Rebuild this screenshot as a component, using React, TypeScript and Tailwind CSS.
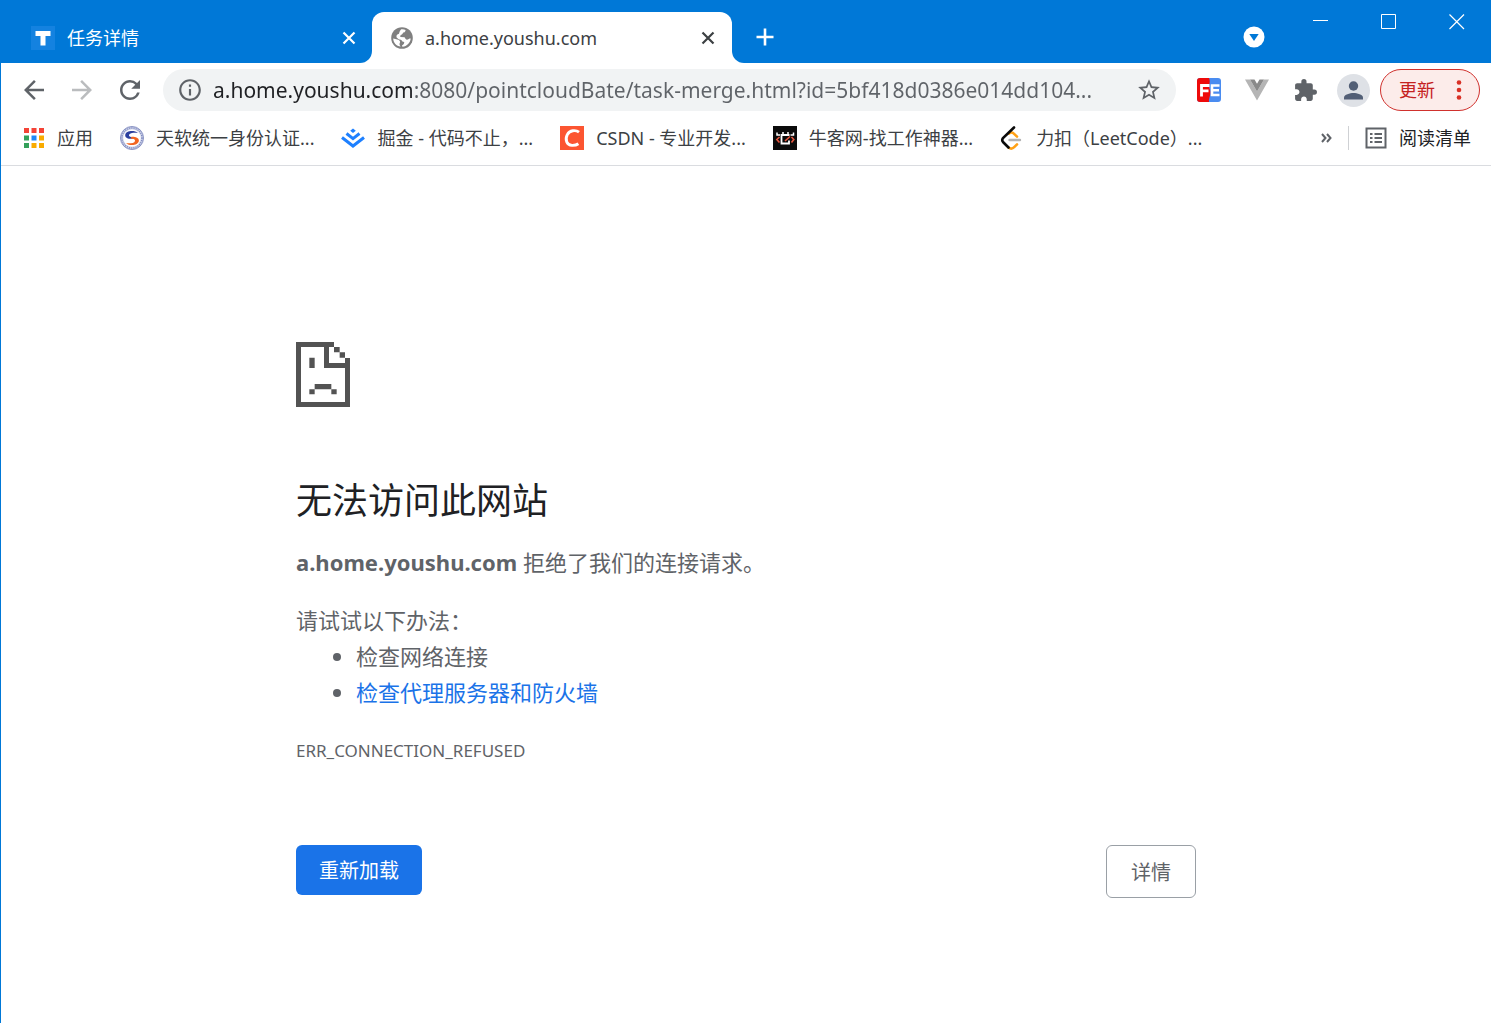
import { useState } from "react";
import type { ReactNode } from "react";
import {
  MdArrowBack,
  MdArrowForward,
  MdExtension,
  MdInfoOutline,
  MdRefresh,
  MdStarBorder,
} from "react-icons/md";

const GlobeIcon = () => (
  <svg className="size-[22px] shrink-0" viewBox="0 0 22 22">
    <circle cx="11" cy="11" r="10.8" fill="#808080" />
    <path
      d="M10.2 2.2 C12 2 13.4 2.3 14.6 2.9 C14.6 4.4 13.6 5.4 12.2 5.6 C11.600 7.200 10.800 7.800 9.600 8 L9.200 10 L13.600 10.200 L14.600 12 C15.600 13.200 17.400 12.600 18.600 11.600 L19.700 11.400 C19.400 15.600 16 19.300 11.400 19.700 L11 18.400 C12.600 17.600 13.400 16.400 13.200 14.900 L11.400 14.400 C10.800 13 9.600 12.600 8 12.600 L5.600 10.400 C5 8.600 6.200 7.200 8 6.800 C8.400 5 9 3.400 10.200 2.200 Z"
      fill="#fff"
    />
    <path
      d="M2.200 11.400 L6.400 12.400 C8.600 13 9.800 14.400 8.800 16 C8.200 17 8.600 18.200 9.600 19.600 C5.400 19 2.300 15.600 2.200 11.400 Z"
      fill="#fff"
    />
  </svg>
);

const CloseIcon = () => (
  <svg className="size-[14px]" viewBox="0 0 14 14">
    <path d="M1.5 1.5 L12.5 12.5 M12.5 1.5 L1.5 12.5" stroke="currentColor" strokeWidth="2.2" />
  </svg>
);

const AppsIcon = () => (
  <svg className="size-[22px] shrink-0" viewBox="0 0 22 22">
    <path d="M1 1h5v5H1z M8.5 1h5v5h-5z M16 1h5v5h-5z" fill="#f44336" />
    <path d="M1 8.5h5v5H1z M1 16h5v5H1z" fill="#34a05a" />
    <path d="M8.5 8.5h5v5h-5z" fill="#1e88f5" />
    <path d="M16 8.5h5v5h-5z M8.5 16h5v5h-5z M16 16h5v5h-5z" fill="#f9ab00" />
  </svg>
);

const TiansoftIcon = () => (
  <svg className="size-6 shrink-0" viewBox="0 0 24 24">
    <circle cx="12" cy="12" r="11.5" fill="#c9cee6" stroke="#8a94c4" strokeWidth="1" />
    <circle cx="12" cy="12" r="10" fill="none" stroke="#7d88bf" strokeWidth="1.4" strokeDasharray="1 1.2" />
    <circle cx="12" cy="12" r="8.8" fill="#fff" />
    <path d="M18 6.8 C14 3.6 5.500 4.600 5.200 9 C5 12.500 9 13 12.600 12.800 L13.600 11 C10.500 11.200 8.800 10.600 9 9 C9.500 6.800 14 6.400 18 6.800 Z" fill="#2b3f9e" />
    <path d="M6 17.2 C10 20.4 18.500 19.400 18.900 14.800 C19 11.500 15 10.600 11.400 10.800 L10.600 12.700 C13.500 12.600 15.300 13.200 15 14.900 C14.500 17.200 10 17.600 6 17.200 Z" fill="#f26522" />
  </svg>
);

const JuejinIcon = () => (
  <svg className="size-6 shrink-0" viewBox="0 0 24 24" fill="none" stroke="#1e80ff" strokeWidth="3">
    <path d="M12 2.600 L14.800 4.800 L12 7 L9.200 4.800 Z" fill="#1e80ff" stroke="none" />
    <path d="M5.500 7.500 L12 12.600 L18.500 7.500" />
    <path d="M1 11.500 L12 20 L23 11.500" />
  </svg>
);

const CsdnIcon = () => (
  <svg className="size-6 shrink-0" viewBox="0 0 24 24">
    <rect width="24" height="24" fill="#fc5531" />
    <path d="M19 6.200 C15.500 3.600 9.800 4.200 7.300 8.600 C4.800 13.400 6.600 19.200 12 19.400 C14.600 19.500 16.800 18.900 18.400 17.800" fill="none" stroke="#fff" strokeWidth="2.900" />
  </svg>
);

const NowcoderIcon = () => (
  <svg className="size-6 shrink-0" viewBox="0 0 24 24">
    <rect width="24" height="24" fill="#0b0b0b" />
    <path d="M16.500 9 H8.500 V17.500 H16 V14.500" fill="none" stroke="#fff" strokeWidth="1.800" />
    <path d="M10 8.500 V6 M15 8.500 V6 M4 6.500 V9 H7 M20.500 6.500 V9 H17.500" fill="none" stroke="#fff" strokeWidth="1.500" />
    <path d="M12 15 L17 10.500 M6.500 11 L3.800 13.500 L6.500 16.500 M18.500 11 L20.800 13.500 L18.500 16.500" fill="none" stroke="#e8573f" strokeWidth="1.600" />
  </svg>
);

const LeetCodeIcon = () => (
  <svg className="size-6 shrink-0" viewBox="0 0 24 24" fill="none" strokeLinecap="round" strokeWidth="2.600">
    <path d="M9 7.600 C10.500 6 12.400 6.200 13.600 7.400 L17 10.600" stroke="#ffa116" />
    <path d="M8.500 21.500 C10.500 23 12.800 22.600 14.200 21.200 L17 18.400" stroke="#ffa116" />
    <path d="M9.500 14 H20" stroke="#b3b3b3" strokeWidth="2.400" />
    <path d="M14 1.500 L3 12 C2 13.400 2 14.800 3 16 L8.500 21.500" stroke="#0a0a0a" />
  </svg>
);

const ReadingListIcon = () => (
  <svg className="size-[22px] shrink-0" viewBox="0 0 22 22" fill="none" stroke="#5f6368" strokeWidth="2">
    <rect x="1.500" y="1.500" width="19" height="19" />
    <path d="M5 7h2.500 M9.500 7H17 M5 11h2.500 M9.500 11H17 M5 15h2.500 M9.500 15H17" />
  </svg>
);

const FeHelperIcon = () => (
  <svg className="size-6" viewBox="0 0 24 24">
    <rect width="24" height="24" rx="3" fill="#4a8cf0" />
    <path d="M3 0 H12 C14 4 11 8 13 12 C14.500 16 11.500 20 12 24 H3 A3 3 0 0 1 0 21 V3 A3 3 0 0 1 3 0 Z" fill="#ee0a0a" />
    <path d="M4.500 18.500 V7.500 H12.500 M4.500 12.800 H11.500" fill="none" stroke="#fff" strokeWidth="2.800" />
    <path d="M22.500 7.500 H15 V17 H22.500 M15 12.300 H22" fill="none" stroke="#fff" strokeWidth="2.600" />
  </svg>
);

const VueIcon = () => (
  <svg className="size-6" viewBox="0 0 24 24">
    <path d="M0 1.500 H5 L12 13.500 L19 1.500 H24 L12 22.500 Z" fill="#b5b5b5" />
    <path d="M5 1.500 H9.500 L12 5.800 L14.500 1.500 H19 L12 13.500 Z" fill="#8a8a8a" />
  </svg>
);

const AvatarIcon = () => (
  <svg className="size-[33px]" viewBox="0 0 33 33">
    <circle cx="16.500" cy="16.500" r="16.500" fill="#dee1e6" />
    <circle cx="16.500" cy="12" r="4.700" fill="#525f76" />
    <path d="M7 25.500 V23.500 C7 20.500 13 19 16.500 19 C20 19 26 20.500 26 23.500 V25.500 Z" fill="#525f76" />
  </svg>
);

const SadPageIcon = () => (
  <svg className="h-[65px] w-[54px]" viewBox="0 0 162 195" fill="#535353">
    <path d="M0 0 H114 V15 H99 V63 H147 V48 H162 V195 H0 Z M15 15 V180 H147 V78 H84 V15 Z" fillRule="evenodd" />
    <path d="M114 15h17v16h-17z M131 31h16v16h-16z M40 47h16v31H40z M56 126h50v16H56z M40 142h16v15H40z M106 142h16v15h-16z" />
  </svg>
);

const bookmarks: { title: string; icon: ReactNode }[] = [
  { title: "天软统一身份认证...", icon: <TiansoftIcon /> },
  { title: "掘金 - 代码不止，...", icon: <JuejinIcon /> },
  { title: "CSDN - 专业开发...", icon: <CsdnIcon /> },
  { title: "牛客网-找工作神器...", icon: <NowcoderIcon /> },
  { title: "力扣（LeetCode）...", icon: <LeetCodeIcon /> },
];

const TabBar = () => (
  <header className="flex h-[63px] overflow-hidden bg-[#0078d7] text-white">
    <div className="mt-3 flex w-[371px] items-center gap-3 pr-4 pl-[30px]">
      <svg className="size-6 shrink-0" viewBox="0 0 24 24">
        <rect width="24" height="24" fill="#1482e0" />
        <path d="M4.500 5 H19.500 V10 H14.500 V19.500 H9.500 V10 H4.500 Z" fill="#fff" />
      </svg>
      <span className="flex-1 truncate text-lg">任务详情</span>
      <button type="button" aria-label="关闭标签页">
        <CloseIcon />
      </button>
    </div>
    <div className="relative mt-3 flex w-[360px] items-center gap-3 rounded-t-xl bg-white pr-[17px] pl-[19px] text-[#3c4043] before:absolute before:bottom-0 before:-left-3 before:size-3 before:rounded-br-xl before:shadow-[4px_4px_0_4px_#fff] after:absolute after:-right-3 after:bottom-0 after:size-3 after:rounded-bl-xl after:shadow-[-4px_4px_0_4px_#fff]">
      <GlobeIcon />
      <span className="flex-1 truncate text-lg">a.home.youshu.com</span>
      <button type="button" aria-label="关闭标签页">
        <CloseIcon />
      </button>
    </div>
    <button type="button" aria-label="新标签页" className="mt-[11px] ml-6">
      <svg className="size-[18px]" viewBox="0 0 18 18">
        <path d="M9 0.500 V17.500 M0.500 9 H17.500" stroke="#fff" strokeWidth="2.600" />
      </svg>
    </button>
    <button type="button" aria-label="搜索标签页" className="mt-[11px] mr-[22px] ml-auto">
      <svg className="size-[22px]" viewBox="0 0 22 22">
        <circle cx="11" cy="11" r="10.500" fill="#fff" />
        <path d="M6.300 8 H15.700 L11 15 Z" fill="#0078d7" />
      </svg>
    </button>
    <div className="flex h-11">
      <button type="button" aria-label="最小化" className="flex w-[68px] items-center justify-center">
        <svg className="size-4" viewBox="0 0 16 16" stroke="#fff">
          <path d="M0 6.500 H15" />
        </svg>
      </button>
      <button type="button" aria-label="最大化" className="flex w-[68px] items-center justify-center">
        <svg className="size-4" viewBox="0 0 16 16" stroke="#fff" fill="none">
          <path d="M0.500 0.500 H14.500 V14.500 H0.500 Z" />
        </svg>
      </button>
      <button type="button" aria-label="关闭" className="flex w-[68px] items-center justify-center">
        <svg className="size-4" viewBox="0 0 16 16" stroke="#fff" strokeWidth="1.200">
          <path d="M0.500 0.500 L15 15 M15 0.500 L0.500 15" />
        </svg>
      </button>
    </div>
  </header>
);

const Toolbar = () => {
  const [url, setUrl] = useState(
    "a.home.youshu.com:8080/pointcloudBate/task-merge.html?id=5bf418d0386e014dd104..."
  );

  return (
    <div className="flex items-center pt-1.5 pr-[11px] pl-[9px] text-[#5f6368]">
      <button type="button" aria-label="后退" className="flex w-12 justify-center">
        <MdArrowBack className="size-[30px]" />
      </button>
      <button type="button" aria-label="前进" className="flex w-12 justify-center text-[#babcbe]">
        <MdArrowForward className="size-[30px]" />
      </button>
      <button type="button" aria-label="重新加载" className="flex w-12 justify-center">
        <MdRefresh className="size-[30px]" />
      </button>

      {/* Address bar */}
      <div className="ml-[9px] flex h-[42px] min-w-0 flex-1 items-center rounded-full bg-[#f1f3f4] px-3.5">
        <MdInfoOutline className="size-[26px] shrink-0" />
        {/* Host is darker than the rest of the address */}
        <input
          type="text"
          aria-label="地址"
          value={url}
          onChange={(e) => setUrl(e.target.value)}
          className="ml-[10px] min-w-0 flex-1 bg-[linear-gradient(to_right,#202124_201px,#5f6368_201px)] bg-clip-text text-[21px] leading-8 text-transparent caret-black outline-none"
        />
        <button type="button" aria-label="为此标签页添加书签" className="ml-2 shrink-0">
          <MdStarBorder className="size-[26px]" />
        </button>
      </div>

      <button type="button" aria-label="FeHelper" className="ml-[9px] flex w-12 justify-center">
        <FeHelperIcon />
      </button>
      <button type="button" aria-label="Vue.js devtools" className="flex w-12 justify-center">
        <VueIcon />
      </button>
      <button type="button" aria-label="扩展程序" className="flex w-12 justify-center">
        <MdExtension className="size-[25px]" />
      </button>
      <button type="button" aria-label="用户" className="flex w-12 justify-center">
        <AvatarIcon />
      </button>
      <button
        type="button"
        className="ml-[3px] flex h-[42px] w-[100px] items-center justify-between rounded-full border border-[#d0312d] bg-[#fcecea] pr-[17px] pl-[18px] text-lg text-[#c5221f]"
      >
        更新
        <svg className="h-[22px] w-[6px]" viewBox="0 0 6 22" fill="#d93025">
          <circle cx="3" cy="3.500" r="2.300" />
          <circle cx="3" cy="11" r="2.300" />
          <circle cx="3" cy="18.500" r="2.300" />
        </svg>
      </button>
    </div>
  );
};

const BookmarksBar = () => (
  <nav className="flex h-[55px] items-center gap-[27px] border-b border-[#dadce0] pr-5 pl-[22px] text-lg whitespace-nowrap text-[#3c4043]">
    <a href="#apps" className="flex items-center gap-3">
      <AppsIcon />
      应用
    </a>
    {bookmarks.map((bookmark) => (
      <a key={bookmark.title} href="#bookmark" className="flex items-center gap-3">
        {bookmark.icon}
        {bookmark.title}
      </a>
    ))}
    <div className="ml-auto flex items-center gap-4">
      <button type="button" aria-label="更多书签">
        <svg className="h-[10px] w-[11px]" viewBox="0 0 11 10" fill="none" stroke="#5f6368" strokeWidth="2">
          <path d="M1 1 L4.500 5 L1 9 M6 1 L9.500 5 L6 9" />
        </svg>
      </button>
      <div className="h-6 w-px bg-[#cfd1d4]" />
      <button type="button" className="flex items-center gap-3 text-[#202124]">
        <ReadingListIcon />
        阅读清单
      </button>
    </div>
  </nav>
);

const App = () => {
  const [showDetails, setShowDetails] = useState(false);

  return (
    <div className="min-h-screen border-l border-[#0078d7] bg-white font-['Noto_Sans','Noto_Sans_CJK_SC',sans-serif]">
      <TabBar />
      <Toolbar />
      <BookmarksBar />

      <main className="mx-auto max-w-[900px] pt-[176px] text-[22px] leading-9 text-[#5f6368]">
        <SadPageIcon />
        <h1 className="mt-[72px] text-4xl leading-[44px] text-[#202124]">无法访问此网站</h1>
        <p className="mt-[21px]">
          <strong>a.home.youshu.com</strong> 拒绝了我们的连接请求。
        </p>
        <p className="mt-[22px]">请试试以下办法：</p>
        <ul className="list-disc pl-[60px]">
          <li>检查网络连接</li>
          <li>
            <a href="#buttons" className="text-[#1a73e8]">
              检查代理服务器和防火墙
            </a>
          </li>
        </ul>
        <p className="mt-[29px] text-[17px] leading-6">ERR_CONNECTION_REFUSED</p>
        <div id="buttons" className="mt-[82px] flex items-start justify-between text-xl">
          <button
            type="button"
            onClick={() => window.location.reload()}
            className="rounded-md bg-[#1a73e8] px-[23px] pt-3 pb-2.5 text-white"
          >
            重新加载
          </button>
          <button
            type="button"
            aria-pressed={showDetails}
            onClick={() => setShowDetails(!showDetails)}
            className="rounded-md border border-[#9aa0a6] px-6 pt-[13px] pb-2.5"
          >
            详情
          </button>
        </div>
      </main>
    </div>
  );
};

export default App;
